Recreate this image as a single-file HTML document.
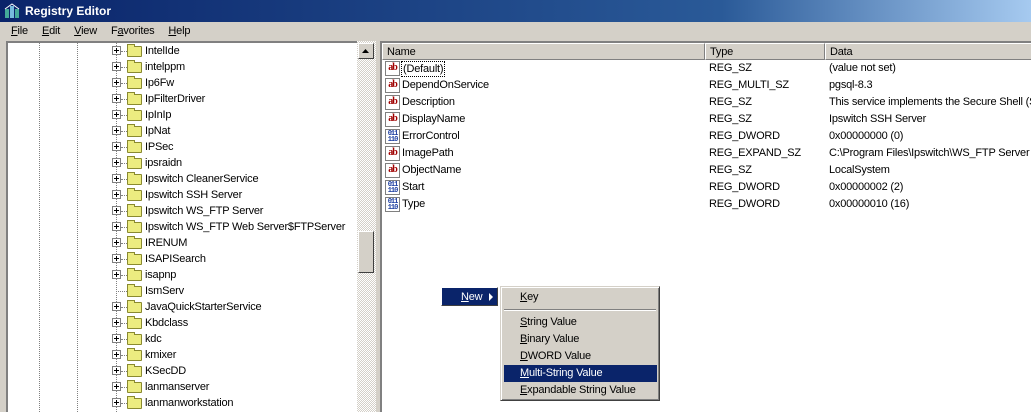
<!DOCTYPE html>
<html><head><style>
*{margin:0;padding:0;box-sizing:border-box}
body{width:1031px;height:412px;overflow:hidden;background:#d4d0c8;font-family:Tahoma,"Liberation Sans",sans-serif;font-size:11px;color:#000;position:relative;letter-spacing:-0.2px}
.abs{position:absolute}
#title{left:0;top:0;width:1031px;height:22px;background:linear-gradient(90deg,#0a246a,#2a5a98 70%,#a6caf0);color:#fff;font-weight:bold;font-size:12px;line-height:22px;padding-left:25px;letter-spacing:0}
#menu{left:0;top:22px;height:19px;line-height:19px}
#menu span{margin-left:11px;margin-right:3px}
u{text-decoration:underline}
#left{left:6px;top:41px;width:370px;height:371px;background:#fff;border-top:2px solid #808080;border-left:2px solid #808080}
.dl{position:absolute;top:0;bottom:0;width:0;border-left:1px dotted #808080}
.row{position:absolute;left:0;height:16px;line-height:16px;white-space:nowrap}
.pl{position:absolute;left:104px;top:3px;width:9px;height:9px;border:1px solid #808080;background:#fff}
.pl:before{content:"";position:absolute;left:1px;top:3px;width:5px;height:1px;background:#000}
.pl:after{content:"";position:absolute;left:3px;top:1px;width:1px;height:5px;background:#000}
.hl{position:absolute;left:113px;top:8px;width:6px;border-top:1px dotted #808080}
.fd{position:absolute;left:119px;top:3px;width:15px;height:11px;background:#ecec80;border:1px solid #8a8a30;border-radius:1px}
.fd:before{content:"";position:absolute;left:-1px;top:-3px;width:6px;height:2px;background:#ecec80;border:1px solid #8a8a30;border-bottom:none}
.tx{position:absolute;left:137px;top:0}
#sb{left:357px;top:41px;width:19px;height:371px;background:repeating-conic-gradient(#d4d0c8 0 25%,#fff 0 50%) 0 0/2px 2px}
.btn{position:absolute;left:1px;width:16px;background:#d4d0c8;border:1px solid;border-color:#fff #404040 #404040 #fff}
#right{left:380px;top:41px;width:651px;height:371px;background:#fff;border-top:2px solid #808080;border-left:2px solid #808080}
.hd{position:absolute;top:0;height:17px;line-height:16px;background:#d4d0c8;border:1px solid;border-color:#fff #808080 #808080 #fff;padding-left:4px}
.vr{position:absolute;height:17px;line-height:17px;white-space:nowrap}
.ic{position:absolute;left:3px;top:1px;width:15px;height:15px;border:1px solid #808080;background:#fff;font:bold 10px "Liberation Serif",serif;color:#a00000;line-height:12px;text-align:center;letter-spacing:-1px}
.ic.b{color:#1a3ca0;font:bold 7px "Liberation Mono",monospace;line-height:6px;padding-top:1px}
#newm{left:441px;top:287px;width:57px;height:19px;background:#0a246a;color:#fff;line-height:18px;padding-left:19px;border:1px solid #fff;border-right-color:#404040;border-bottom-color:#404040}
#sub{left:500px;top:286px;width:160px;height:115px;background:#d4d0c8;border:1px solid;border-color:#d4d0c8 #404040 #404040 #d4d0c8;box-shadow:inset 1px 1px #fff,inset -1px -1px #808080}
.mi{position:absolute;left:3px;width:153px;height:17px;line-height:17px;padding-left:16px}
</style></head><body>
<div id="title" class="abs">Registry Editor</div>
<svg class="abs" style="left:4px;top:3px" width="17" height="16"><rect x="1" y="6" width="4" height="9" fill="#4a9"/><rect x="6" y="3" width="4" height="12" fill="#7bd"/><rect x="11" y="6" width="4" height="9" fill="#4a9"/><path d="M1 6l7-5 7 5" stroke="#fff" fill="none"/></svg>
<div id="menu" class="abs"><span><u>F</u>ile</span><span><u>E</u>dit</span><span><u>V</u>iew</span><span>F<u>a</u>vorites</span><span><u>H</u>elp</span></div>
<div id="left" class="abs">
<div class="dl" style="left:31px"></div><div class="dl" style="left:69px"></div><div class="dl" style="left:108px"></div>
<div class="row" style="top:0"><div class="pl"></div><div class="hl"></div><div class="fd"></div><div class="tx">IntelIde</div></div>
<div class="row" style="top:16px"><div class="pl"></div><div class="hl"></div><div class="fd"></div><div class="tx">intelppm</div></div>
<div class="row" style="top:32px"><div class="pl"></div><div class="hl"></div><div class="fd"></div><div class="tx">Ip6Fw</div></div>
<div class="row" style="top:48px"><div class="pl"></div><div class="hl"></div><div class="fd"></div><div class="tx">IpFilterDriver</div></div>
<div class="row" style="top:64px"><div class="pl"></div><div class="hl"></div><div class="fd"></div><div class="tx">IpInIp</div></div>
<div class="row" style="top:80px"><div class="pl"></div><div class="hl"></div><div class="fd"></div><div class="tx">IpNat</div></div>
<div class="row" style="top:96px"><div class="pl"></div><div class="hl"></div><div class="fd"></div><div class="tx">IPSec</div></div>
<div class="row" style="top:112px"><div class="pl"></div><div class="hl"></div><div class="fd"></div><div class="tx">ipsraidn</div></div>
<div class="row" style="top:128px"><div class="pl"></div><div class="hl"></div><div class="fd"></div><div class="tx">Ipswitch CleanerService</div></div>
<div class="row" style="top:144px"><div class="pl"></div><div class="hl"></div><div class="fd"></div><div class="tx">Ipswitch SSH Server</div></div>
<div class="row" style="top:160px"><div class="pl"></div><div class="hl"></div><div class="fd"></div><div class="tx">Ipswitch WS_FTP Server</div></div>
<div class="row" style="top:176px"><div class="pl"></div><div class="hl"></div><div class="fd"></div><div class="tx">Ipswitch WS_FTP Web Server$FTPServer</div></div>
<div class="row" style="top:192px"><div class="pl"></div><div class="hl"></div><div class="fd"></div><div class="tx">IRENUM</div></div>
<div class="row" style="top:208px"><div class="pl"></div><div class="hl"></div><div class="fd"></div><div class="tx">ISAPISearch</div></div>
<div class="row" style="top:224px"><div class="pl"></div><div class="hl"></div><div class="fd"></div><div class="tx">isapnp</div></div>
<div class="row" style="top:240px"><div class="hl" style="left:108px;width:11px"></div><div class="fd"></div><div class="tx">IsmServ</div></div>
<div class="row" style="top:256px"><div class="pl"></div><div class="hl"></div><div class="fd"></div><div class="tx">JavaQuickStarterService</div></div>
<div class="row" style="top:272px"><div class="pl"></div><div class="hl"></div><div class="fd"></div><div class="tx">Kbdclass</div></div>
<div class="row" style="top:288px"><div class="pl"></div><div class="hl"></div><div class="fd"></div><div class="tx">kdc</div></div>
<div class="row" style="top:304px"><div class="pl"></div><div class="hl"></div><div class="fd"></div><div class="tx">kmixer</div></div>
<div class="row" style="top:320px"><div class="pl"></div><div class="hl"></div><div class="fd"></div><div class="tx">KSecDD</div></div>
<div class="row" style="top:336px"><div class="pl"></div><div class="hl"></div><div class="fd"></div><div class="tx">lanmanserver</div></div>
<div class="row" style="top:352px"><div class="pl"></div><div class="hl"></div><div class="fd"></div><div class="tx">lanmanworkstation</div></div>
</div>
<div id="sb" class="abs">
<div class="btn" style="top:2px;height:16px"><svg width="14" height="14"><path d="M3 9h7L6.5 5z" fill="#000"/></svg></div>
<div class="btn" style="top:190px;height:42px"></div>
</div>
<div id="right" class="abs">
<div class="hd" style="left:0;width:323px">Name</div>
<div class="hd" style="left:323px;width:120px">Type</div>
<div class="hd" style="left:443px;width:210px">Data</div>
<div class="vr" style="top:17px;left:0"><div class="ic">ab</div><span style="position:absolute;left:19px;border:1px dotted #000;padding:0 1px;line-height:14px;top:1px">(Default)</span><span style="position:absolute;left:327px">REG_SZ</span><span style="position:absolute;left:447px">(value&nbsp;not&nbsp;set)</span></div>
<div class="vr" style="top:34px;left:0"><div class="ic">ab</div><span style="position:absolute;left:20px">DependOnService</span><span style="position:absolute;left:327px">REG_MULTI_SZ</span><span style="position:absolute;left:447px">pgsql-8.3</span></div>
<div class="vr" style="top:51px;left:0"><div class="ic">ab</div><span style="position:absolute;left:20px">Description</span><span style="position:absolute;left:327px">REG_SZ</span><span style="position:absolute;left:447px">This service implements the Secure Shell (S</span></div>
<div class="vr" style="top:68px;left:0"><div class="ic">ab</div><span style="position:absolute;left:20px">DisplayName</span><span style="position:absolute;left:327px">REG_SZ</span><span style="position:absolute;left:447px">Ipswitch SSH Server</span></div>
<div class="vr" style="top:85px;left:0"><div class="ic b">011<br>110</div><span style="position:absolute;left:20px">ErrorControl</span><span style="position:absolute;left:327px">REG_DWORD</span><span style="position:absolute;left:447px">0x00000000&nbsp;(0)</span></div>
<div class="vr" style="top:102px;left:0"><div class="ic">ab</div><span style="position:absolute;left:20px">ImagePath</span><span style="position:absolute;left:327px">REG_EXPAND_SZ</span><span style="position:absolute;left:447px">C:\Program Files\Ipswitch\WS_FTP Server</span></div>
<div class="vr" style="top:119px;left:0"><div class="ic">ab</div><span style="position:absolute;left:20px">ObjectName</span><span style="position:absolute;left:327px">REG_SZ</span><span style="position:absolute;left:447px">LocalSystem</span></div>
<div class="vr" style="top:136px;left:0"><div class="ic b">011<br>110</div><span style="position:absolute;left:20px">Start</span><span style="position:absolute;left:327px">REG_DWORD</span><span style="position:absolute;left:447px">0x00000002&nbsp;(2)</span></div>
<div class="vr" style="top:153px;left:0"><div class="ic b">011<br>110</div><span style="position:absolute;left:20px">Type</span><span style="position:absolute;left:327px">REG_DWORD</span><span style="position:absolute;left:447px">0x00000010&nbsp;(16)</span></div>
</div>
<div id="newm" class="abs"><u>N</u>ew<svg style="position:absolute;left:47px;top:5px" width="5" height="8"><path d="M0 0l4 4-4 4z" fill="#fff"/></svg></div>
<div id="sub" class="abs">
<div class="mi" style="top:2px"><u>K</u>ey</div>
<div style="position:absolute;left:3px;top:22px;width:152px;height:2px;border-top:1px solid #808080;border-bottom:1px solid #fff"></div>
<div class="mi" style="top:27px"><u>S</u>tring Value</div>
<div class="mi" style="top:44px"><u>B</u>inary Value</div>
<div class="mi" style="top:61px"><u>D</u>WORD Value</div>
<div class="mi" style="top:78px;background:#0a246a;color:#fff"><u>M</u>ulti-String Value</div>
<div class="mi" style="top:95px"><u>E</u>xpandable String Value</div>
</div>
</body></html>
